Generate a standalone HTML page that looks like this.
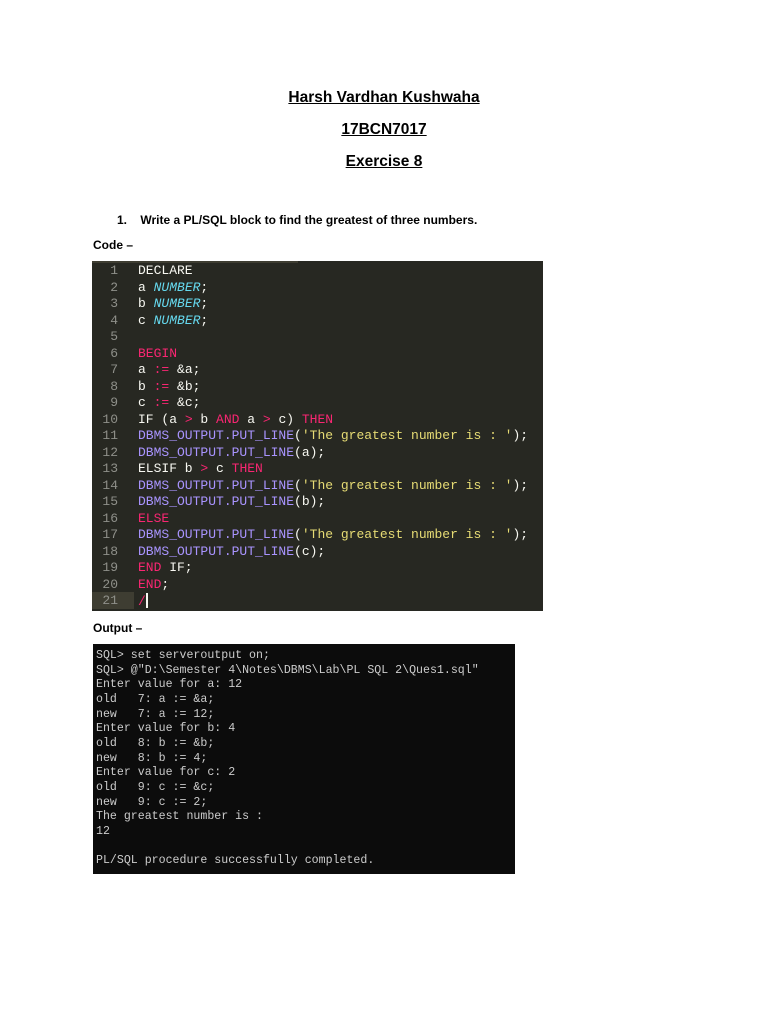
<!DOCTYPE html>
<html><head><meta charset="utf-8"><style>
body{margin:0;background:#fff;width:768px;height:1024px;position:relative;overflow:hidden;font-family:"Liberation Sans",sans-serif;}
.h{position:absolute;left:0;width:768px;text-align:center;font-weight:bold;font-size:15.5px;color:#000;}
.h span{text-decoration:underline;}
.t{position:absolute;font-size:12px;font-weight:bold;color:#000;}
#code{position:absolute;left:92px;top:261px;width:451px;height:350px;background:#272822;}
#code .ln{position:absolute;left:0;width:26px;text-align:right;color:#8f908a;}
#code pre,#term pre{margin:0;}
#code .l{position:absolute;left:46px;white-space:pre;color:#f8f8f2;}
#code div{font-family:"Liberation Mono",monospace;font-size:13px;line-height:16.5px;}
.k{color:#f92672}.ty{color:#66d9ef;font-style:italic}.s{color:#e6db74}.f{color:#a994ff}
#term{position:absolute;left:93px;top:644px;width:422px;height:230px;background:#0c0c0c;}
#term pre{position:absolute;left:3px;top:5px;font-family:"Liberation Mono",monospace;font-size:11.6px;line-height:14.65px;color:#cccccc;}
</style></head><body>
<div class="h" style="top:89px"><span>Harsh Vardhan Kushwaha</span></div>
<div class="h" style="top:121px"><span>17BCN7017</span></div>
<div class="h" style="top:153px"><span>Exercise 8</span></div>
<div class="t" style="left:117px;top:213px">1.&nbsp;&nbsp;&nbsp; Write a PL/SQL block to find the greatest of three numbers.</div>
<div class="t" style="left:93px;top:238px">Code –</div>
<div id="code">
<div style="position:absolute;left:0;top:0;width:206px;height:2px;background:#3e3d32"></div>
<div style="position:absolute;left:0;top:331px;width:42px;height:17px;background:#3e3d32"></div>
<div class="ln" style="top:2px">1<br>2<br>3<br>4<br>5<br>6<br>7<br>8<br>9<br>10<br>11<br>12<br>13<br>14<br>15<br>16<br>17<br>18<br>19<br>20<br>21</div>
<div class="l" style="top:2px">DECLARE
a <span class="ty">NUMBER</span>;
b <span class="ty">NUMBER</span>;
c <span class="ty">NUMBER</span>;

<span class="k">BEGIN</span>
a <span class="k">:=</span> &amp;a;
b <span class="k">:=</span> &amp;b;
c <span class="k">:=</span> &amp;c;
IF (a <span class="k">&gt;</span> b <span class="k">AND</span> a <span class="k">&gt;</span> c) <span class="k">THEN</span>
<span class="f">DBMS_OUTPUT.PUT_LINE</span>(<span class="s">'The greatest number is : '</span>);
<span class="f">DBMS_OUTPUT.PUT_LINE</span>(a);
ELSIF b <span class="k">&gt;</span> c <span class="k">THEN</span>
<span class="f">DBMS_OUTPUT.PUT_LINE</span>(<span class="s">'The greatest number is : '</span>);
<span class="f">DBMS_OUTPUT.PUT_LINE</span>(b);
<span class="k">ELSE</span>
<span class="f">DBMS_OUTPUT.PUT_LINE</span>(<span class="s">'The greatest number is : '</span>);
<span class="f">DBMS_OUTPUT.PUT_LINE</span>(c);
<span class="k">END</span> IF;
<span class="k">END</span>;
<span class="k">/</span><span style="display:inline-block;width:2px;height:15px;background:#f8f8f2;vertical-align:-3px"></span></div>
</div>
<div class="t" style="left:93px;top:621px">Output –</div>
<div id="term"><pre>SQL&gt; set serveroutput on;
SQL&gt; @"D:\Semester 4\Notes\DBMS\Lab\PL SQL 2\Ques1.sql"
Enter value for a: 12
old   7: a := &amp;a;
new   7: a := 12;
Enter value for b: 4
old   8: b := &amp;b;
new   8: b := 4;
Enter value for c: 2
old   9: c := &amp;c;
new   9: c := 2;
The greatest number is :
12

PL/SQL procedure successfully completed.</pre></div>
</body></html>
